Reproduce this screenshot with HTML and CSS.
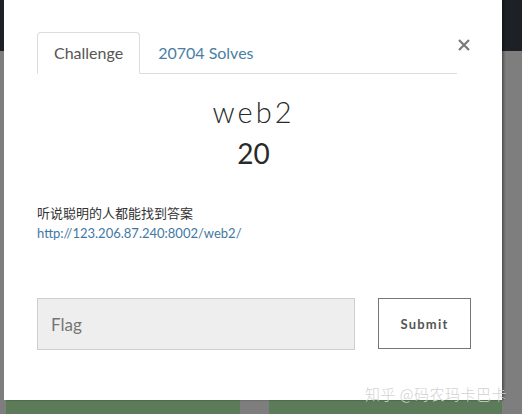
FILE: index.html
```html
<!DOCTYPE html>
<html lang="zh">
<head>
<meta charset="utf-8">
<title>web2</title>
<link rel="stylesheet" href="styles.css">
</head>
<body>
<div class="page">
  <header class="navbar"></header>
  <main class="backdrop">
    <div class="bottom-row">
      <div class="green-btn left"></div>
      <div class="green-btn right"></div>
    </div>
  </main>

  <div class="modal">
    <div class="modal-head">
      <ul class="tabs">
        <li class="tab active">Challenge</li>
        <li class="tab link">20704 Solves</li>
      </ul>
      <span class="close"><svg width="12" height="12" viewBox="0 0 12 12"><path d="M1 1L11 11M11 1L1 11" stroke="#7a7a7a" stroke-width="2.2" fill="none"/></svg></span>
    </div>
    <h2 class="title">web2</h2>
    <h3 class="points">20</h3>
    <div class="desc">
      <p>听说聪明的人都能找到答案</p>
      <a class="url" href="#">http://123.206.87.240:8002/web2/</a>
    </div>
    <form class="flag-form">
      <input class="flag-input" type="text" placeholder="Flag">
      <button class="submit" type="button">Submit</button>
    </form>
  </div>

  <div class="watermark">知乎 @码农玛卡巴卡</div>
</div>
</body>
</html>
```

FILE: styles.css
```css
html, body {
  margin: 0;
  padding: 0;
  width: 522px;
  height: 414px;
  overflow: hidden;
  font-family: "Lato", "Noto Sans CJK SC", sans-serif;
}

.page {
  position: relative;
  width: 522px;
  height: 414px;
  display: flex;
  flex-direction: column;
  background: #7e7e7e;
}

.navbar {
  height: 51px;
  background: #1d2024;
  flex: none;
}

.backdrop {
  flex: 1;
  background: #7e7e7e;
}

.bottom-row {
  display: flex;
  padding: 349px 0 0 6px;
  gap: 29px;
}

.green-btn {
  height: 20px;
  background: #5b7b59;
}

.green-btn.left { width: 234px; }
.green-btn.right { width: 233px; }

.modal {
  position: absolute;
  left: 4px;
  top: 0;
  width: 498px;
  height: 400px;
  background: #fff;
  box-sizing: border-box;
  padding: 32px 32px 0 33px;
  box-shadow: 2px 0 2px rgba(0, 0, 0, 0.35);
}

.modal-head {
  display: flex;
  align-items: flex-start;
}

.tabs {
  list-style: none;
  margin: 0;
  padding: 0;
  display: flex;
  width: 420px;
  border-bottom: 1px solid #dcdcdc;
}

.tab {
  height: 40px;
  line-height: 42px;
  padding: 0 16px;
  margin-right: 2px;
  font-size: 16px;
  box-sizing: border-box;
  margin-bottom: -1px;
}

.tab.active {
  color: #555;
  border: 1px solid #dcdcdc;
  border-bottom-color: #fff;
  border-radius: 4px 4px 0 0;
  height: 42px;
  line-height: 40px;
  background: #fff;
}

.tab.link {
  color: #4a7ea6;
  line-height: 42px;
}

.close {
  display: flex;
  margin-left: 1px;
  padding-top: 7px;
  width: 12px;
}

.title {
  margin: 21px 0 0;
  text-align: center;
  font-size: 29px;
  line-height: 34px;
  font-weight: 300;
  letter-spacing: 3px;
  color: #2a2a2a;
}

.points {
  margin: 8px 0 0;
  text-align: center;
  font-size: 28px;
  line-height: 32px;
  font-weight: 400;
  color: #2a2a2a;
}

.desc {
  margin-top: 33px;
  font-size: 13px;
  line-height: 21px;
}

.desc p {
  margin: 0;
  color: #333;
  font-family: "Noto Sans CJK SC", sans-serif;
  font-size: 13px;
}

.url {
  color: #3f78a3;
  text-decoration: none;
}

.flag-form {
  display: flex;
  justify-content: space-between;
  margin-top: 54px;
  width: 434px;
}

.flag-input {
  width: 318px;
  height: 52px;
  box-sizing: border-box;
  background: #eee;
  border: 1px solid #cfcfcf;
  padding: 0 13px;
  font-family: "Lato", sans-serif;
  font-size: 17px;
  color: #555;
  outline: none;
}

.flag-input::placeholder { color: #757575; }

.submit {
  width: 93px;
  height: 51px;
  box-sizing: border-box;
  background: #fff;
  border: 1px solid #767676;
  font-family: "Lato", sans-serif;
  font-weight: 700;
  font-size: 13px;
  letter-spacing: 1.2px;
  color: #555;
  padding: 0;
}

.watermark {
  position: absolute;
  left: 365px;
  top: 383px;
  font-family: "Noto Sans CJK SC", sans-serif;
  font-size: 15px;
  font-weight: 300;
  letter-spacing: 0.5px;
  color: #d2d2d2;
  white-space: nowrap;
}
```
